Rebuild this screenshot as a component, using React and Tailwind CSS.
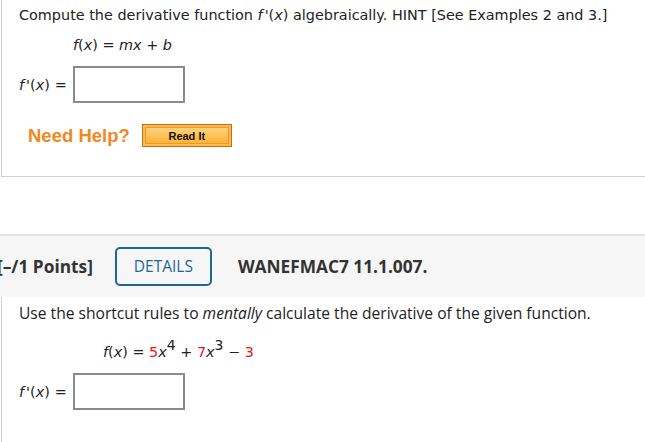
import React from "react";

const verdana = { fontFamily: '"DejaVu Sans", Verdana, sans-serif' };

function Box() {
  return <div className="w-[112px] h-[37px] shrink-0 border-2 border-[#8a8a8a] bg-white" />;
}

function PrimeRow() {
  return (
    <div className="flex items-center">
      <span className="flex w-[54px] shrink-0 items-center gap-[5px] whitespace-nowrap">
        <span>
          <i className="mr-[2px]">f</i>'(<i>x</i>)
        </span>
        <span>=</span>
      </span>
      <Box />
    </div>
  );
}

export default function App() {
  return (
    <div className="w-[645px] h-[442px] overflow-hidden bg-white text-[#222]">
      {/* top panel */}
      <div
        className="ml-px h-[177px] border-l border-b border-[#cfcfcf] pl-[17px] pt-[6px] text-[14.4px] leading-[18px]"
        style={verdana}
      >
        <div className="whitespace-nowrap">
          Compute the derivative function <i className="mr-[2px]">f</i>'(<i>x</i>) algebraically. HINT [See Examples 2 and 3.]
        </div>
        <div className="mt-[12px] pl-[54px]">
          <i>f</i>(<i>x</i>) = <i>mx</i> + <i>b</i>
        </div>
        <div className="mt-[12px]">
          <PrimeRow />
        </div>
        <div className="mt-[21px] flex items-center pl-[9px]">
          <span
            className="text-[18.5px] font-bold text-[#f0891f] leading-[23px]"
            style={{ fontFamily: '"Liberation Sans", Arial, sans-serif' }}
          >
            Need Help?
          </span>
          <span className="ml-[12px] flex h-[23px] w-[90px] items-center justify-center border border-[#c0701a] bg-[#ffb944] p-[2px]">
            <span
              className="flex h-full w-full items-center justify-center border border-[#e59a3a] bg-gradient-to-b from-[#ffd27a] to-[#ffb230] text-[11px] font-bold text-[#111]"
              style={{ fontFamily: '"Liberation Sans", Arial, sans-serif' }}
            >
              Read It
            </span>
          </span>
        </div>
      </div>

      {/* header */}
      <div
        className="mt-[57px] flex h-[63px] items-center border-t-2 border-[#e2e2e2] bg-[#f6f6f6] text-[#333]"
        style={{ fontFamily: '"Open Sans", sans-serif' }}
      >
        <span className="ml-[-3px] text-[17.3px] font-bold whitespace-nowrap">[–/1 Points]</span>
        <span className="ml-[22px] flex h-[39px] w-[97px] items-center justify-center rounded-[5px] border-2 border-[#1d6898] text-[15.5px] text-[#1d6898]">
          DETAILS
        </span>
        <span className="ml-[26px] text-[17.3px] font-bold whitespace-nowrap">WANEFMAC7 11.1.007.</span>
      </div>

      {/* lower panel */}
      <div className="ml-px h-[200px] border-l border-[#cfcfcf] pl-[17px] pt-[6px]">
        <div
          className="text-[15.6px] leading-[20px] text-[#222] whitespace-nowrap"
          style={{ fontFamily: '"Open Sans", sans-serif' }}
        >
          Use the shortcut rules to <i>mentally</i> calculate the derivative of the given function.
        </div>
        <div className="text-[14.4px] leading-[18px]" style={verdana}>
          <div className="mt-[20px] pl-[84px] whitespace-nowrap">
            <i>f</i>(<i>x</i>) = <span className="text-[#e8141b]">5</span>
            <i>x</i>
            <sup className="text-[14px]">4</sup> + <span className="text-[#e8141b]">7</span>
            <i>x</i>
            <sup className="text-[14px]">3</sup> − <span className="text-[#e8141b]">3</span>
          </div>
          <div className="mt-[12px]">
            <PrimeRow />
          </div>
        </div>
      </div>
    </div>
  );
}
